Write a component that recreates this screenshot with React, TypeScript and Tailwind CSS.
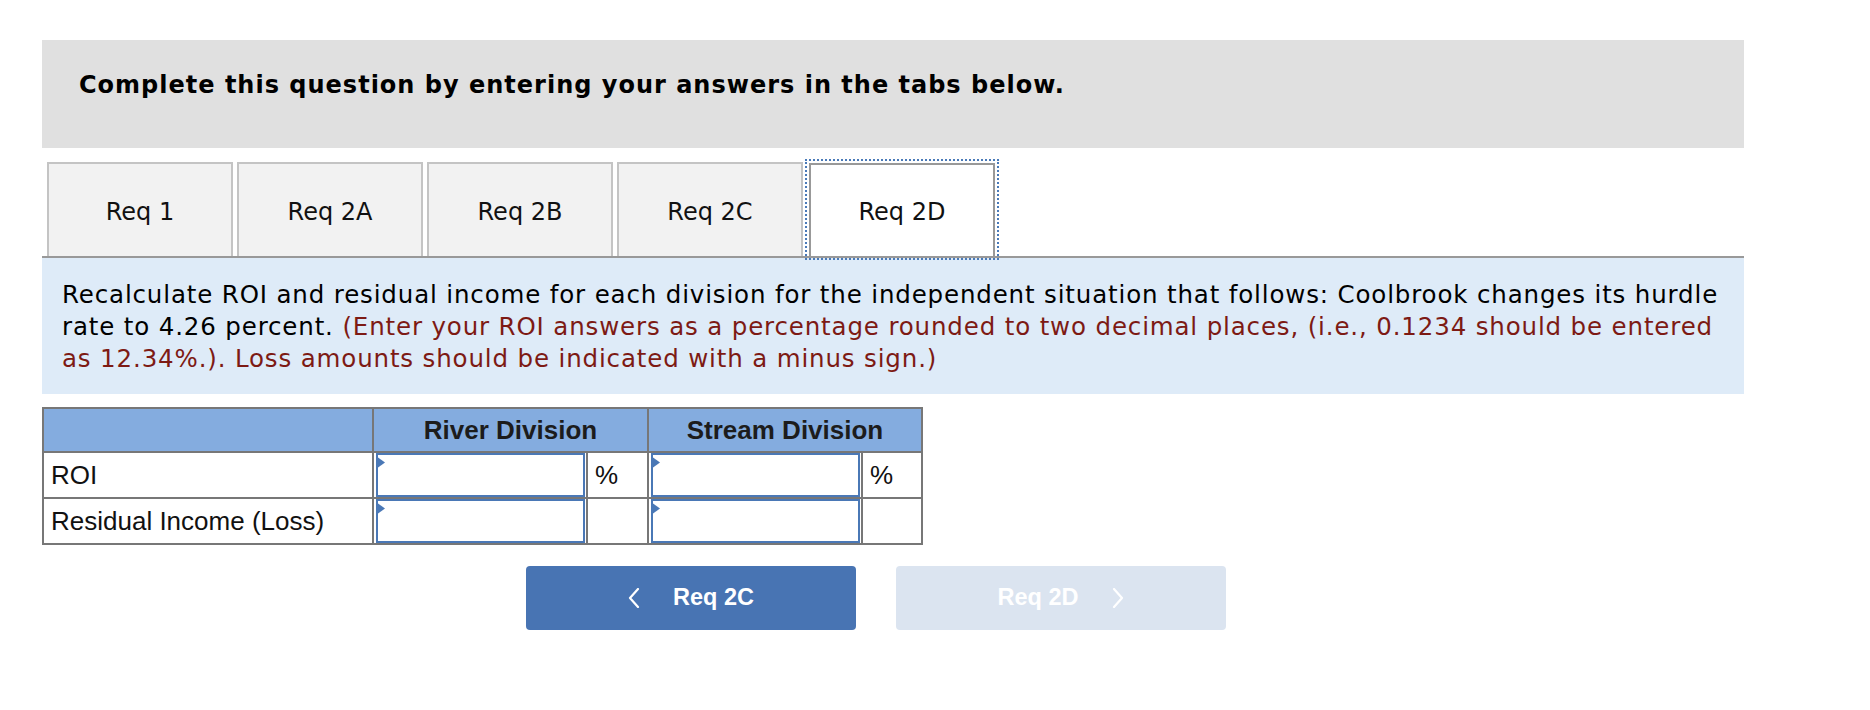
import React from "react";

const verdana = { fontFamily: '"DejaVu Sans", Verdana, sans-serif' };

function Marker() {
  return (
    <svg className="absolute left-[-2px] top-[1px]" width="9" height="13" viewBox="0 0 9 13">
      <polygon points="0,0 9,6.5 0,13" fill="#4a78b6" />
    </svg>
  );
}

function InputCell() {
  return (
    <div className="bg-white pl-[2px] pr-[1px] h-[44px]">
      <div className="relative h-full border-2 border-[#4a78b6] bg-white">
        <Marker />
      </div>
    </div>
  );
}

function PctCell({ show }: { show: boolean }) {
  return (
    <div className="bg-white h-[44px] flex items-center pl-[7px] text-[26px] text-[#111]">
      {show ? "%" : ""}
    </div>
  );
}

function Chevron({ dir }: { dir: "left" | "right" }) {
  return (
    <svg width="12" height="20" viewBox="0 0 12 20" fill="none">
      {dir === "left" ? (
        <polyline points="10,1 2,10 10,19" stroke="white" strokeWidth="2.2" strokeLinecap="round" strokeLinejoin="round" />
      ) : (
        <polyline points="2,1 10,10 2,19" stroke="white" strokeWidth="2.2" strokeLinecap="round" strokeLinejoin="round" />
      )}
    </svg>
  );
}

export default function App() {
  const tabs = ["Req 1", "Req 2A", "Req 2B", "Req 2C"];
  return (
    <div className="w-[1870px] h-[710px] bg-white pt-[40px] pl-[42px]">
      <div className="w-[1702px]">
        <div className="h-[108px] bg-[#e0e0e0] pl-[37px] pt-[32px]">
          <div className="text-[24px] leading-[27px] tracking-[1px] font-bold text-black whitespace-nowrap" style={verdana}>
            Complete this question by entering your answers in the tabs below.
          </div>
        </div>

        <div className="mt-[14px] flex items-end gap-[4px] pl-[5px]">
          {tabs.map((t) => (
            <div
              key={t}
              className="w-[186px] h-[94px] pt-[4px] border-2 border-b-0 border-[#c4c4c4] bg-[#f2f2f2] flex items-center justify-center text-[24px] text-[#111]"
              style={verdana}
            >
              {t}
            </div>
          ))}
          <div
            className="w-[186px] h-[93px] pt-[2px] ml-[2px] border-2 border-b-0 border-[#999] bg-white flex items-center justify-center text-[24px] text-[#111] outline-2 outline-dotted outline-[#4a7ab8] outline-offset-2"
            style={verdana}
          >
            Req 2D
          </div>
        </div>
        <div className="h-[2px] bg-[#999]" />

        <div className="h-[136px] bg-[#deebf8] pl-[20px] pt-[21px]">
          <div className="text-[24.5px] leading-[32px] tracking-[0.85px] text-black whitespace-nowrap" style={verdana}>
            Recalculate ROI and residual income for each division for the independent situation that follows: Coolbrook changes its hurdle
            <br />
            rate to 4.26 percent.{" "}
            <span className="text-[#7d1a14]">
              (Enter your ROI answers as a percentage rounded to two decimal places, (i.e., 0.1234 should be entered
              <br />
              as 12.34%.). Loss amounts should be indicated with a minus sign.)
            </span>
          </div>
        </div>

        <div className="mt-[13px] w-[881px] bg-[#777] p-[2px] grid grid-cols-[328px_212px_59px_212px_58px] gap-[2px] font-['Liberation_Sans',Arial,sans-serif]">
          <div className="bg-[#84acdf] h-[42px]" />
          <div className="col-span-2 bg-[#84acdf] h-[42px] flex items-center justify-center text-[26px] font-bold text-[#1c1c1c]">
            River Division
          </div>
          <div className="col-span-2 bg-[#84acdf] h-[42px] flex items-center justify-center text-[26px] font-bold text-[#1c1c1c]">
            Stream Division
          </div>

          <div className="bg-white h-[44px] flex items-center pl-[7px] text-[26px] text-[#111]">ROI</div>
          <InputCell />
          <PctCell show />
          <InputCell />
          <PctCell show />

          <div className="bg-white h-[44px] flex items-center pl-[7px] text-[26px] text-[#111]">Residual Income (Loss)</div>
          <InputCell />
          <PctCell show={false} />
          <InputCell />
          <PctCell show={false} />
        </div>

        <div className="mt-[21px] ml-[484px] flex gap-[40px] font-['Liberation_Sans',Arial,sans-serif]">
          <div className="w-[330px] h-[64px] rounded-[4px] bg-[#4874b3] flex items-center justify-center gap-[33px] text-white text-[23.5px] font-bold">
            <Chevron dir="left" />
            <span>Req 2C</span>
          </div>
          <div className="w-[330px] h-[64px] rounded-[4px] bg-[#dbe4f0] flex items-center justify-center gap-[34px] text-white text-[23.5px] font-bold">
            <span>Req 2D</span>
            <Chevron dir="right" />
          </div>
        </div>
      </div>
    </div>
  );
}
